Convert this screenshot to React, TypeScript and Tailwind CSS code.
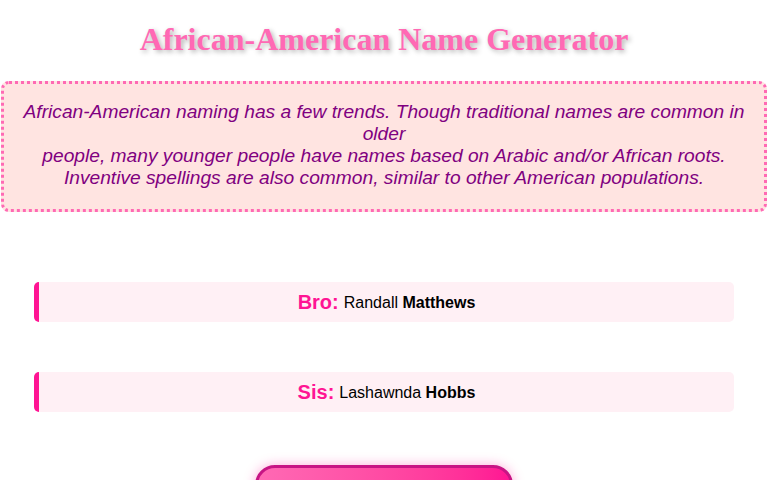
export default function App() {
  return (
    <div className="min-h-[480px] w-full bg-white" style={{ fontFamily: '"Liberation Sans", Arial, sans-serif' }}>
      <h1
        className="pt-[19px] text-center text-[32px] font-bold leading-[40px] text-[#ff69b4] [text-shadow:2px_2px_5px_rgba(0,0,0,0.3)]"
        style={{ fontFamily: '"Liberation Serif", "Times New Roman", serif' }}
      >
        African-American Name Generator
      </h1>
      <div className="mx-px mt-[22px] rounded-[8px] border-[3px] border-dotted border-[#ff69b4] bg-[#ffe4e1] px-[18px] pb-[20px] pt-[17px] text-center text-[19.2px] italic leading-[22px] text-[#800080]">
        African-American naming has a few trends. Though traditional names are common in older
        <br />
        people, many younger people have names based on Arabic and/or African roots. Inventive spellings are also common, similar to other American populations.
      </div>
      <div className="mx-auto mt-[70px] flex w-[700px] flex-col gap-[50px]">
        <div className="flex h-[40px] items-center justify-center rounded-[5px] border-l-[5px] border-[#ff1493] bg-[#fff0f5]">
          <span className="text-[20px] font-bold text-[#ff1493]">Bro:</span>
          <span className="ml-[5px] mt-[2px] text-[16px] text-black">
            Randall <b>Matthews</b>
          </span>
        </div>
        <div className="flex h-[40px] items-center justify-center rounded-[5px] border-l-[5px] border-[#ff1493] bg-[#fff0f5]">
          <span className="text-[20px] font-bold text-[#ff1493]">Sis:</span>
          <span className="ml-[5px] mt-[2px] text-[16px] text-black">
            Lashawnda <b>Hobbs</b>
          </span>
        </div>
      </div>
      <div className="mt-[53px] flex justify-center">
        <button className="h-[50px] w-[258px] rounded-[20px] border-[3px] border-[#c71585] bg-gradient-to-r from-[#ff69b4] to-[#ff1493] shadow-[0_0_12px_rgba(255,20,147,0.35)]"></button>
      </div>
    </div>
  );
}
